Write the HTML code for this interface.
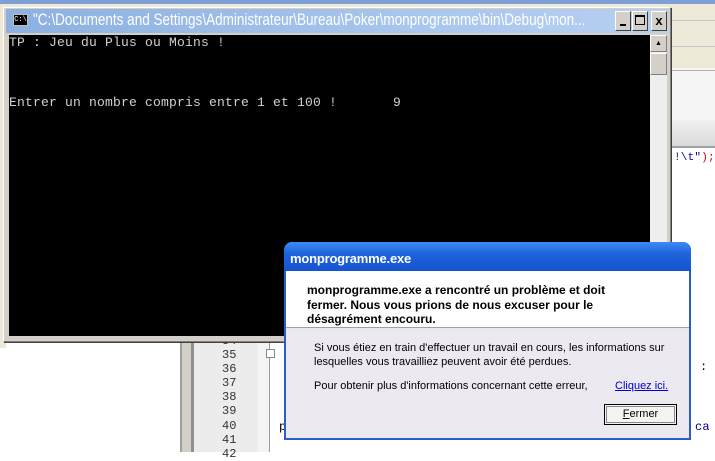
<!DOCTYPE html>
<html><head><style>
*{margin:0;padding:0;box-sizing:border-box}
body{width:715px;height:452px;overflow:hidden;position:relative;background:#fff;font-family:"Liberation Sans",sans-serif}
.abs{position:absolute}
.mono{font-family:"Liberation Mono",monospace;font-size:13px;color:#c0c0c0;white-space:pre;letter-spacing:0.2px}
</style></head><body>
<div class="abs" style="left:0;top:0;width:715px;height:4px;background:#7d9fd6"></div>
<div class="abs" style="left:0;top:4px;width:715px;height:64px;background:#ece9d8"></div>
<div class="abs" style="left:670px;top:20px;width:45px;height:1px;background:#c8c8c8"></div>
<div class="abs" style="left:670px;top:46px;width:45px;height:1px;background:#c8c8c8"></div>
<div class="abs" style="left:670px;top:68px;width:45px;height:52px;background:#f5f5f5"></div>
<div class="abs" style="left:670px;top:70px;width:45px;height:1px;background:#b0b0b0"></div>
<div class="abs" style="left:670px;top:120px;width:45px;height:28px;background:linear-gradient(#f0f0f0,#d8d8d8)"></div>
<div class="abs" style="left:670px;top:146px;width:45px;height:2px;background:#a0a0a0"></div>
<div class="abs mono" style="left:674px;top:152px;font-size:11px;color:#0000a0">!\t"<span style="color:#c00">);</span></div>
<div class="abs" style="left:0;top:68px;width:6px;height:280px;background:#ece9d8"></div>
<div class="abs" style="left:180px;top:340px;width:14px;height:112px;background:#d4d0c8;border-left:2px solid #a0a0a0;border-right:3px solid #909090"></div>
<div class="abs" style="left:194px;top:340px;width:64px;height:112px;background:#ececec"></div>
<div class="abs" style="left:258px;top:340px;width:12px;height:112px;background:#f4f4f4;border-right:1px solid #999"></div>
<div class="abs mono" style="left:222px;top:334px;font-size:12px;color:#333;line-height:14.1px;letter-spacing:0">34
35
36
37
38
39
40
41
42</div>
<div class="abs" style="left:266px;top:349px;width:9px;height:9px;border:1px solid #888;background:#fff"></div>
<div class="abs mono" style="left:279px;top:420px;font-size:12px;color:#000">p</div>
<div class="abs" style="left:3px;top:7px;width:668px;height:335px;background:#d4d0c8;border:1px solid #fff;border-right-color:#808080;border-bottom-color:#808080;box-shadow:1px 1px 0 #404040"></div>
<div class="abs" style="left:6px;top:9px;width:662px;height:24px;background:linear-gradient(to right,#8cb0e0,#a8c6ec 60%,#b6d0f0)"></div>
<div class="abs" style="left:13px;top:14px;width:15px;height:12px;background:#000;border:1px solid #c0c0c0;color:#fff;font-size:7px;line-height:10px;text-align:center;font-family:'Liberation Mono',monospace">C:\</div>
<div class="abs" style="left:33px;top:9px;font-size:17px;color:#fff;white-space:nowrap;transform:scaleX(0.795);transform-origin:left;line-height:22px">"C:\Documents and Settings\Administrateur\Bureau\Poker\monprogramme\bin\Debug\mon...</div>
<div class="abs" style="left:615px;top:11px;width:16px;height:20px;background:#d4d0c8;border:1px solid #fff;border-right-color:#404040;border-bottom-color:#404040"><div style="position:absolute;left:4px;top:12px;width:6px;height:2px;background:#000"></div></div>
<div class="abs" style="left:632px;top:11px;width:16px;height:20px;background:#d4d0c8;border:1px solid #fff;border-right-color:#404040;border-bottom-color:#404040"><div style="position:absolute;left:2px;top:3px;width:10px;height:10px;border:1px solid #000;border-top-width:2px"></div></div>
<div class="abs" style="left:651px;top:11px;width:16px;height:20px;background:#d4d0c8;border:1px solid #fff;border-right-color:#404040;border-bottom-color:#404040;font-weight:bold;font-size:13px;text-align:center;line-height:18px">x</div>
<div class="abs" style="left:9px;top:35px;width:641px;height:301px;background:#000"></div>
<div class="abs" style="left:650px;top:35px;width:17px;height:301px;background:#eeeeee"></div>
<div class="abs" style="left:650px;top:35px;width:17px;height:17px;background:#d4d0c8;border:1px solid #fff;border-right-color:#808080;border-bottom-color:#808080;font-size:7px;text-align:center;line-height:15px">▲</div>
<div class="abs" style="left:650px;top:53px;width:17px;height:22px;background:#d4d0c8;border:1px solid #fff;border-right-color:#808080;border-bottom-color:#808080"></div>
<div class="abs mono" style="left:9px;top:35px;line-height:15px;color:#d0d0d0">TP : Jeu du Plus ou Moins !</div>
<div class="abs mono" style="left:9px;top:95px;line-height:15px;color:#d0d0d0">Entrer un nombre compris entre 1 et 100 !       9</div>
<div class="abs" style="left:284px;top:242px;width:407px;height:198px;background:#ece9d8;border:2px solid #2a5bd0;border-top:none;border-radius:8px 8px 0 0"></div>
<div class="abs" style="left:284px;top:242px;width:407px;height:29px;border-radius:8px 8px 0 0;background:linear-gradient(#3d8af5,#1f63db 40%,#1653d0)"></div>
<div class="abs" style="left:290px;top:251px;font-size:13px;font-weight:bold;color:#fff;letter-spacing:-0.2px">monprogramme.exe</div>
<div class="abs" style="left:286px;top:271px;width:403px;height:57px;background:#fff;border-bottom:1px solid #a0a0a0"></div>
<div class="abs" style="left:286px;top:329px;width:403px;height:109px;background:#eceaf0"></div>
<div class="abs" style="left:307px;top:283px;font-size:12px;font-weight:bold;color:#000;line-height:14.5px;width:340px">monprogramme.exe a rencontré un problème et doit<br>fermer. Nous vous prions de nous excuser pour le<br>désagrément encouru.</div>
<div class="abs" style="left:314px;top:341px;font-size:11px;color:#000;line-height:14px;white-space:nowrap">Si vous étiez en train d'effectuer un travail en cours, les informations sur<br>lesquelles vous travailliez peuvent avoir été perdues.</div>
<div class="abs" style="left:314px;top:380px;font-size:11px;color:#000;white-space:nowrap">Pour obtenir plus d'informations concernant cette erreur,</div>
<div class="abs" style="left:615px;top:380px;font-size:11px;color:#0000cc;text-decoration:underline;white-space:nowrap">Cliquez ici.</div>
<div class="abs" style="left:604px;top:404px;width:73px;height:21px;background:#f4f4f0;border:1px solid #000;outline:1px solid #888;outline-offset:-3px;font-size:11px;text-align:center;line-height:19px"><u>F</u>ermer</div>
<div class="abs" style="left:691px;top:255px;width:24px;height:197px;background:#fff"></div>
<div class="abs mono" style="left:700px;top:360px;font-size:12px;color:#000">: .</div>
<div class="abs mono" style="left:695px;top:420px;font-size:12px;color:#000080">ca</div>
</body></html>
